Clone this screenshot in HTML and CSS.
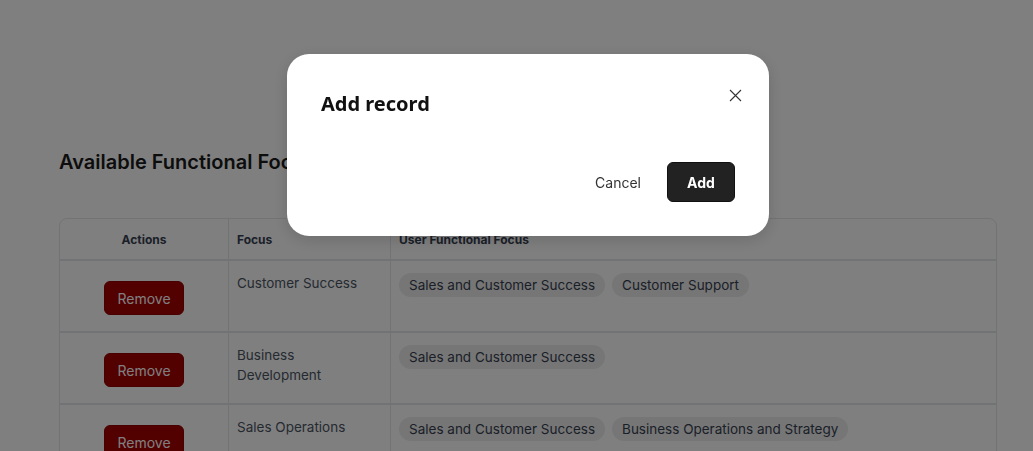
FILE: index.html
```html
<!DOCTYPE html>
<html lang="en">
<head>
  <meta charset="UTF-8">
  <title>Functional Focus</title>
  <link rel="stylesheet" href="styles.css">
</head>
<body>
  <div class="page">
    <h2 class="page-title">Available Functional Focus</h2>

    <table class="focus-table">
      <thead>
        <tr>
          <th class="col-actions">Actions</th>
          <th class="col-focus">Focus</th>
          <th>User Functional Focus</th>
        </tr>
      </thead>
      <tbody>
        <tr>
          <td class="cell-actions"><button class="btn-remove">Remove</button></td>
          <td class="cell-focus">Customer Success</td>
          <td>
            <div class="pills">
              <span class="pill">Sales and Customer Success</span>
              <span class="pill">Customer Support</span>
            </div>
          </td>
        </tr>
        <tr>
          <td class="cell-actions"><button class="btn-remove">Remove</button></td>
          <td class="cell-focus">Business Development</td>
          <td>
            <div class="pills">
              <span class="pill">Sales and Customer Success</span>
            </div>
          </td>
        </tr>
        <tr>
          <td class="cell-actions"><button class="btn-remove">Remove</button></td>
          <td class="cell-focus">Sales Operations</td>
          <td>
            <div class="pills">
              <span class="pill">Sales and Customer Success</span>
              <span class="pill">Business Operations and Strategy</span>
            </div>
          </td>
        </tr>
      </tbody>
    </table>
  </div>

  <div class="overlay">
    <div class="modal">
      <div class="modal-head">
        <h3 class="modal-title">Add record</h3>
        <button class="modal-close" aria-label="Close">
          <svg width="13" height="13" viewBox="0 0 13 13">
            <path d="M1 1 L12 12 M12 1 L1 12" stroke="#333" stroke-width="1.1" fill="none"/>
          </svg>
        </button>
      </div>
      <div class="modal-foot">
        <button class="btn-cancel">Cancel</button>
        <button class="btn-add">Add</button>
      </div>
    </div>
  </div>
</body>
</html>
```

FILE: styles.css
```css
body {
  margin: 0;
  font-family: Inter, "Liberation Sans", sans-serif;
  background: #ffffff;
  color: #1f2937;
}
.page {
  padding: 148px 36px 0 59px;
}
.page-title {
  margin: 0 0 42px;
  font-size: 20px;
  font-weight: 600;
  line-height: 28px;
  color: #1a1a1a;
}
.focus-table {
  width: 100%;
  border-collapse: separate;
  border-spacing: 0;
  border: 1px solid #e5e7eb;
  border-radius: 8px;
  font-size: 13.5px;
}
.focus-table th {
  height: 40px;
  padding: 0 8px;
  font-size: 12px;
  font-weight: 700;
  color: #374151;
  text-align: left;
  border-bottom: 2px solid #e5e7eb;
}
.focus-table th + th,
.focus-table td + td {
  border-left: 1px solid #e5e7eb;
}
.focus-table th.col-actions {
  width: 152px;
  text-align: center;
}
.focus-table th.col-focus {
  width: 145px;
}
.focus-table td {
  height: 46px;
  padding: 12px 8px;
  vertical-align: top;
  color: #4b5563;
  line-height: 20px;
  border-bottom: 2px solid #e5e7eb;
}
.cell-actions {
  text-align: center;
}
.btn-remove {
  margin-top: 8px;
  height: 34px;
  padding: 0 12px;
  border: 1px solid #900000;
  border-radius: 6px;
  background: #a60000;
  color: #ffffff;
  font-family: Inter, "Liberation Sans", sans-serif;
  font-size: 14px;
}
.pills {
  display: flex;
  flex-wrap: wrap;
  gap: 7px;
}
.pill {
  padding: 3px 10px 2px;
  border-radius: 12px;
  background: #ececec;
  color: #374151;
  line-height: 19px;
}
.overlay {
  position: fixed;
  inset: 0;
  background: rgba(0, 0, 0, 0.5);
  display: flex;
  justify-content: center;
  align-items: flex-start;
}
.modal {
  margin-top: 54px;
  margin-left: 23px;
  width: 414px;
  padding: 33px 34px 34px;
  background: #ffffff;
  border-radius: 22px;
  box-shadow: 0 4px 16px rgba(0, 0, 0, 0.15);
}
.modal-head {
  display: flex;
  justify-content: space-between;
  align-items: flex-start;
}
.modal-title {
  margin: 0;
  font-family: "Noto Sans", sans-serif;
  font-size: 20px;
  font-weight: 700;
  line-height: 34px;
  color: #111111;
}
.modal-close {
  margin-top: 2px;
  margin-right: -7px;
  padding: 0;
  border: 0;
  background: none;
  width: 13px;
  height: 13px;
}
.modal-foot {
  margin-top: 41px;
  display: flex;
  justify-content: flex-end;
  align-items: center;
  gap: 18px;
}
.btn-cancel {
  padding: 0 8px;
  height: 40px;
  border: 0;
  background: none;
  font-family: Inter, "Liberation Sans", sans-serif;
  font-size: 14px;
  color: #333333;
}
.btn-add {
  width: 68px;
  height: 40px;
  border: 1px solid #111111;
  border-radius: 6px;
  background: #222222;
  color: #ffffff;
  font-family: Inter, "Liberation Sans", sans-serif;
  font-size: 14px;
  font-weight: 700;
}
```
